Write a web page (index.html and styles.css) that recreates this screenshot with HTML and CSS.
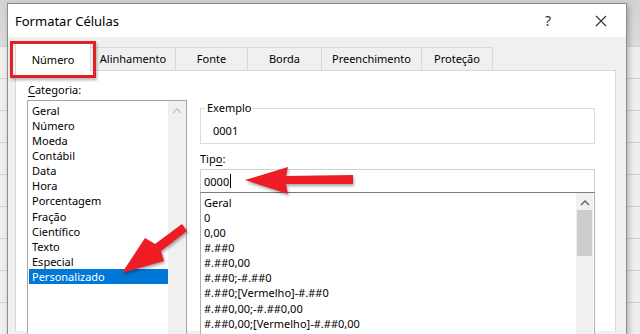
FILE: index.html
```html
<!DOCTYPE html>
<html lang="pt-BR">
<head>
    <meta charset="UTF-8">
    <title>Formatar Células</title>
    <link rel="stylesheet" href="styles.css">
</head>
<body>
    <div class="dialog">
        <div class="titlebar">
            <span class="title">Formatar Células</span>
            <span class="help">?</span>
            <span class="close">
                <svg width="12" height="12" viewBox="0 0 12 12"><path d="M1 1 L11 11 M11 1 L1 11" stroke="#333" stroke-width="1.1" fill="none"/></svg>
            </span>
        </div>

        <div class="tabs">
            <div class="tab active" style="width:76px">Número</div>
            <div class="tab" style="width:86px">Alinhamento</div>
            <div class="tab" style="width:73px">Fonte</div>
            <div class="tab" style="width:75px">Borda</div>
            <div class="tab" style="width:101px">Preenchimento</div>
            <div class="tab" style="width:72px">Proteção</div>
        </div>

        <div class="panel">
            <div class="col-left">
                <div class="label"><u>C</u>ategoria:</div>
                <div class="listbox category">
                    <ul class="items">
                        <li>Geral</li>
                        <li>Número</li>
                        <li>Moeda</li>
                        <li>Contábil</li>
                        <li>Data</li>
                        <li>Hora</li>
                        <li>Porcentagem</li>
                        <li>Fração</li>
                        <li>Científico</li>
                        <li>Texto</li>
                        <li>Especial</li>
                        <li class="selected">Personalizado</li>
                    </ul>
                    <div class="scrollbar">
                        <svg class="up" width="10" height="6" viewBox="0 0 10 6"><path d="M1 5 L5 1 L9 5" stroke="#c4c4c4" stroke-width="1.4" fill="none"/></svg>
                    </div>
                </div>
            </div>

            <div class="col-right">
                <fieldset class="sample">
                    <legend>Exemplo</legend>
                    <div class="sample-value">0001</div>
                </fieldset>
                <div class="label type-label">Tip<u>o</u>:</div>
                <div class="type-input">0000<span class="caret"></span></div>
                <div class="listbox formats">
                    <ul class="items">
                        <li>Geral</li>
                        <li>0</li>
                        <li>0,00</li>
                        <li>#.##0</li>
                        <li>#.##0,00</li>
                        <li>#.##0;-#.##0</li>
                        <li>#.##0;[Vermelho]-#.##0</li>
                        <li>#.##0,00;-#.##0,00</li>
                        <li>#.##0,00;[Vermelho]-#.##0,00</li>
                    </ul>
                    <div class="scrollbar">
                        <svg class="up" width="10" height="6" viewBox="0 0 10 6"><path d="M1 5 L5 1 L9 5" stroke="#606060" stroke-width="1.4" fill="none"/></svg>
                        <div class="thumb"></div>
                    </div>
                </div>
            </div>
        </div>
    </div>

    <!-- annotations drawn over the screenshot -->
    <div class="callout"></div>
    <svg class="arrows" width="640" height="334" viewBox="0 0 640 334">
        <polygon points="245,180 288,167 286,176 353,175 353,184 286,184 288,194" fill="#ee1c24"/>
        <polygon points="122,273 145,238 155,244 182,224 187,231 161,251 164,261" fill="#ee1c24"/>
    </svg>
</body>
</html>
```

FILE: styles.css
```css
* {
    margin: 0;
    padding: 0;
    box-sizing: border-box;
}

body {
    width: 640px;
    height: 334px;
    overflow: hidden;
    font-family: 'Noto Sans', 'Open Sans', sans-serif;
    font-size: 11px;
    color: #000;
    background:
        linear-gradient(to bottom, #d2d2d2 0, #dcdcdc 46px, transparent 46px),
        repeating-linear-gradient(to bottom, #efefef 0, #efefef 31px, #d0d0d0 31px, #d0d0d0 32px);
    background-position: 0 0, 0 15px;
    position: relative;
    padding: 3px 0 0 7px;
}

/* Dialog window */
.dialog {
    width: 620px;
    height: 331px;
    background: #f0f0f0;
    border: 1px solid #8c8c8c;
    border-bottom: none;
    box-shadow: 2px 2px 6px rgba(0,0,0,0.25);
}

.titlebar {
    height: 33px;
    background: #fff;
    display: flex;
    align-items: center;
    padding-left: 7px;
}

.title {
    font-size: 13px;
    flex: 1;
}

.help {
    width: 20px;
    text-align: center;
    font-size: 14px;
    color: #333;
}

.close {
    width: 46px;
    margin-left: 20px;
    margin-right: 2px;
    display: flex;
    justify-content: center;
}

/* Tabs */
.tabs {
    height: 33px;
    display: flex;
    align-items: flex-end;
    padding-left: 7px;
}

.tab {
    height: 23px;
    line-height: 21px;
    text-align: center;
    border: 1px solid #d9d9d9;
    border-bottom: none;
    margin-right: -1px;
    background: #f0f0f0;
}

.tab.active {
    height: 28px;
    line-height: 32px;
    background: #fff;
    margin-bottom: -1px;
    position: relative;
    z-index: 1;
}

.panel {
    margin-left: 7px;
    width: 601px;
    height: 261px;
    background: #fff;
    border: 1px solid #d9d9d9;
    border-bottom: none;
    display: flex;
    gap: 13px;
    padding: 11px 0 0 11px;
}

.label {
    line-height: 16px;
    padding-left: 1px;
}

.label u {
    text-decoration-thickness: 1px;
    text-underline-offset: 2px;
}

/* List boxes */
.listbox {
    position: relative;
    display: flex;
    background: #fff;
    border: 1px solid #a5a5a5;
    border-bottom: none;
    overflow: hidden;
}

.items {
    list-style: none;
    flex: 1;
    padding-top: 1.5px;
}

.items li {
    line-height: 15.15px;
    white-space: nowrap;
}

.scrollbar {
    width: 17px;
    background: #f0f0f0;
    display: flex;
    flex-direction: column;
    align-items: center;
}

.scrollbar .up {
    margin-top: 7px;
}

.category {
    width: 160px;
    height: 234px;
    margin-top: 2px;
}

.category .items li {
    padding-left: 3px;
    margin-left: 1px;
}

.category .items li.selected {
    background: #0078d7;
    color: #fff;
}

.category .scrollbar {
    width: 18px;
}

/* Right column */
.col-right {
    width: 395px;
    padding-top: 18px;
}

.sample {
    border: 1px solid #dcdcdc;
    padding: 7px 0 4px 12px;
}

.sample legend {
    margin-left: -8px;
    padding: 0 2px;
    line-height: 16px;
}

.sample-value {
    line-height: 16px;
}

.type-label {
    margin-top: 7px;
    padding-left: 0;
}

.type-input {
    margin-top: 2px;
    height: 23px;
    line-height: 21px;
    border: 1px solid #d0d0d0;
    border-bottom: none;
    padding-left: 3px;
    display: flex;
    align-items: center;
}

.caret {
    display: inline-block;
    width: 1px;
    height: 14px;
    background: #000;
    margin-left: 1px;
}

.formats {
    height: 142px;
    border-color: #adb0b6;
    border-top-color: #7a7d86;
}

.formats .items li {
    padding-left: 3px;
}

.formats .scrollbar {
    margin-right: 1px;
}

.thumb {
    width: 15px;
    height: 46px;
    margin-top: 4px;
    background: #cdcdcd;
}

/* Annotations */
.callout {
    position: absolute;
    left: 10px;
    top: 41px;
    width: 86px;
    height: 37px;
    border: 3px solid #e31e24;
    box-shadow: 1px 2px 3px rgba(0,0,0,0.3);
    z-index: 5;
}

.arrows {
    position: absolute;
    left: 0;
    top: 0;
    z-index: 6;
    filter: drop-shadow(1px 2px 1.5px rgba(0,0,0,0.35));
}
```
